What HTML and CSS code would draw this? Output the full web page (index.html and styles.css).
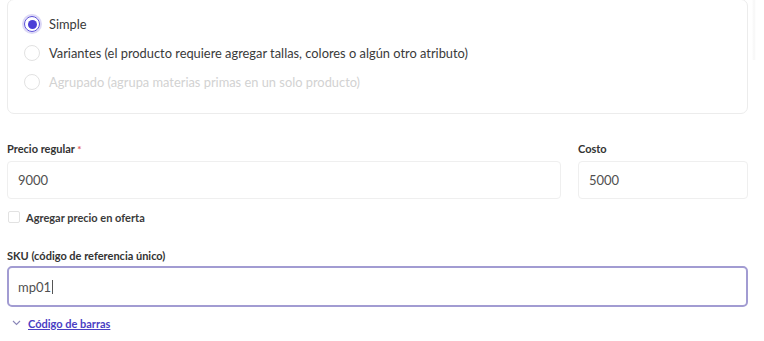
FILE: index.html
```html
<!DOCTYPE html>
<html lang="es">
<head>
<meta charset="utf-8">
<link rel="stylesheet" href="styles.css">
</head>
<body>
<div class="page">
  <div class="card">
    <label class="radio-row">
      <span class="radio checked"><span class="dot"></span></span>
      <span class="radio-text">Simple</span>
    </label>
    <label class="radio-row">
      <span class="radio"></span>
      <span class="radio-text">Variantes (el producto requiere agregar tallas, colores o algún otro atributo)</span>
    </label>
    <label class="radio-row disabled">
      <span class="radio"></span>
      <span class="radio-text">Agrupado (agrupa materias primas en un solo producto)</span>
    </label>
  </div>

  <div class="price-row">
    <div class="field grow">
      <div class="label">Precio regular <span class="req">*</span></div>
      <div class="input">9000</div>
    </div>
    <div class="field cost">
      <div class="label">Costo</div>
      <div class="input">5000</div>
    </div>
  </div>

  <label class="check-row">
    <span class="checkbox"></span>
    <span class="check-text">Agregar precio en oferta</span>
  </label>

  <div class="field sku">
    <div class="label">SKU (código de referencia único)</div>
    <div class="input focused">mp01<span class="caret"></span></div>
  </div>

  <div class="barcode">
    <svg class="chev" width="9" height="6" viewBox="0 0 9 6"><path d="M1 1 L4.5 4.5 L8 1" fill="none" stroke="#8a87b8" stroke-width="1.1"/></svg>
    <a class="link" href="#">Código de barras</a>
  </div>
</div>
<div class="edge"></div>
</body>
</html>
```
FILE: styles.css
```css
html, body {
  margin: 0;
  padding: 0;
  background: #ffffff;
}
body {
  font-family: Lato, "Open Sans", sans-serif;
  color: #3d3d3d;
  width: 764px;
  height: 341px;
  overflow: hidden;
  position: relative;
}
.page {
  padding: 0 16px 0 7px;
  display: flex;
  flex-direction: column;
}
.card {
  margin-top: -1px;
  border: 1px solid #ececec;
  border-radius: 7px;
  padding: 15px 15px 22px 15px;
  display: flex;
  flex-direction: column;
  gap: 11px;
}
.radio-row {
  display: flex;
  align-items: center;
  gap: 9px;
  height: 18px;
  font-size: 12.85px;
  color: #3a3a3a;
}
.radio-row.disabled {
  color: #d2d2d2;
}
.radio {
  width: 16px;
  height: 16px;
  border-radius: 50%;
  border: 1px solid #e2e2e2;
  box-sizing: border-box;
  display: flex;
  align-items: center;
  justify-content: center;
  flex: none;
  margin-left: 1px;
}
.radio.checked {
  border: 1.5px solid #5a4fd8;
  box-shadow: 0 0 0 2px #dcd8f6;
}
.radio .dot {
  width: 9px;
  height: 9px;
  border-radius: 50%;
  background: #4b3fd6;
}
.price-row {
  display: flex;
  gap: 17px;
  margin-top: 28px;
}
.field {
  display: flex;
  flex-direction: column;
}
.grow { flex: 1; }
.cost { width: 170px; }
.label {
  font-size: 11px;
  font-weight: 700;
  color: #333;
  line-height: 14px;
  height: 14px;
}
.req {
  color: #e35a5a;
  font-size: 10px;
}
.input {
  margin-top: 5px;
  height: 38px;
  box-sizing: border-box;
  border: 1px solid #efefef;
  border-radius: 4px;
  display: flex;
  align-items: center;
  padding-left: 10px;
  font-size: 13px;
  color: #505050;
}
.check-row {
  display: flex;
  align-items: center;
  gap: 6px;
  margin-top: 12px;
  height: 12px;
  padding-left: 1px;
}
.checkbox {
  width: 12px;
  height: 12px;
  box-sizing: border-box;
  border: 1px solid #e2e2e2;
  border-radius: 2px;
}
.check-text {
  font-size: 11px;
  font-weight: 700;
  color: #3a3a3a;
}
.sku {
  margin-top: 26px;
}
.sku .label { height: 14px; }
.input.focused {
  margin-top: 3px;
  height: 41px;
  border: 2px solid #a29cd2;
  border-radius: 5px;
  padding-left: 9px;
}
.caret {
  display: inline-block;
  width: 1px;
  height: 14px;
  background: #555;
  margin-left: 1px;
}
.barcode {
  display: flex;
  align-items: center;
  gap: 7px;
  margin-top: 10px;
  padding-left: 5px;
  height: 12px;
}
.link {
  color: #4a40c4;
  font-size: 11px;
  font-weight: 700;
  text-decoration: underline;
}
.edge {
  position: absolute;
  right: 8px;
  top: 0;
  width: 4px;
  height: 60px;
  background: linear-gradient(to right, #ffffff, #f6f6f6, #ffffff);
}
```
